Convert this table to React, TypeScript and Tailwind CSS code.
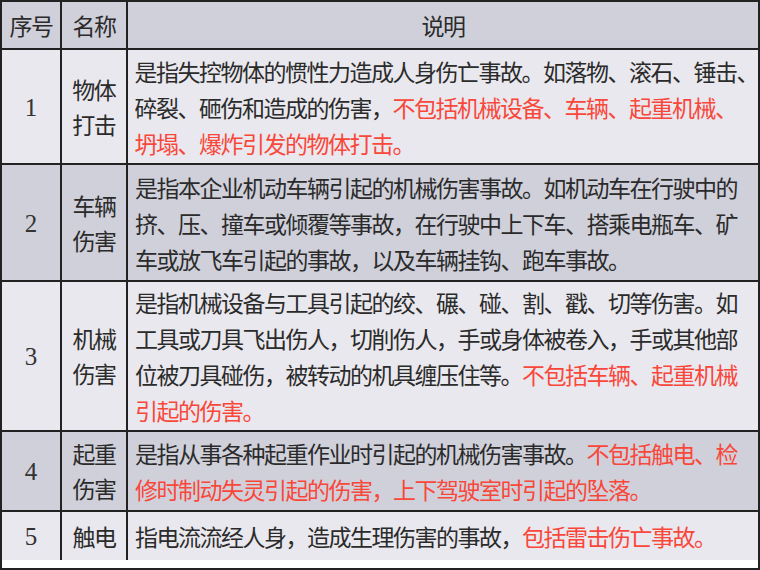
type Seg = { t: string; red?: boolean };

interface IRow {
  no: string;
  name: string[];
  lines: Seg[][];
  dark: boolean;
  height: string;
}

const rows: IRow[] = [
  {
    no: "1",
    name: ["物体", "打击"],
    dark: false,
    height: "h-[115px]",
    lines: [
      [{ t: "是指失控物体的惯性力造成人身伤亡事故。如落物、滚石、锤击、" }],
      [
        { t: "碎裂、砸伤和造成的伤害，" },
        { t: "不包括机械设备、车辆、起重机械、", red: true },
      ],
      [{ t: "坍塌、爆炸引发的物体打击。", red: true }],
    ],
  },
  {
    no: "2",
    name: ["车辆", "伤害"],
    dark: true,
    height: "h-[117px]",
    lines: [
      [{ t: "是指本企业机动车辆引起的机械伤害事故。如机动车在行驶中的" }],
      [{ t: "挤、压、撞车或倾覆等事故，在行驶中上下车、搭乘电瓶车、矿" }],
      [{ t: "车或放飞车引起的事故，以及车辆挂钩、跑车事故。" }],
    ],
  },
  {
    no: "3",
    name: ["机械", "伤害"],
    dark: false,
    height: "h-[150px]",
    lines: [
      [{ t: "是指机械设备与工具引起的绞、碾、碰、割、戳、切等伤害。如" }],
      [{ t: "工具或刀具飞出伤人，切削伤人，手或身体被卷入，手或其他部" }],
      [
        { t: "位被刀具碰伤，被转动的机具缠压住等。" },
        { t: "不包括车辆、起重机械", red: true },
      ],
      [{ t: "引起的伤害。", red: true }],
    ],
  },
  {
    no: "4",
    name: ["起重", "伤害"],
    dark: true,
    height: "h-[80px]",
    lines: [
      [
        { t: "是指从事各种起重作业时引起的机械伤害事故。" },
        { t: "不包括触电、检", red: true },
      ],
      [{ t: "修时制动失灵引起的伤害，上下驾驶室时引起的坠落。", red: true }],
    ],
  },
  {
    no: "5",
    name: ["触电"],
    dark: false,
    height: "h-[48px]",
    lines: [
      [
        { t: "指电流流经人身，造成生理伤害的事故，" },
        { t: "包括雷击伤亡事故。", red: true },
      ],
    ],
  },
];

const cjk = "font-['Noto_Sans_CJK_SC',sans-serif] text-[23px] tracking-[-1.5px] text-[#2b2b2b]";

function TableRow({ row, last }: { row: IRow; last: boolean }) {
  return (
    <div
      className={`flex ${row.height} ${row.dark ? "bg-[#d0d0da]" : "bg-[#e9e8ee]"} ${
        last ? "" : "border-b-2 border-[#222]"
      }`}
    >
      <div className="flex w-[60px] items-center justify-center border-r-2 border-[#222] pt-[2px] font-['Liberation_Serif',serif] text-[25px] text-[#333]">
        {row.no}
      </div>
      <div className={`flex w-[66px] flex-col items-center justify-center border-r-2 border-[#222] leading-[35px] ${cjk}`}>
        {row.name.map((n) => (
          <div key={n}>{n}</div>
        ))}
      </div>
      <div className={`flex flex-1 flex-col justify-center pl-[7px] leading-[36px] ${cjk}`}>
        {row.lines.map((line, i) => (
          <div key={i} className="whitespace-nowrap">
            {line.map((s, j) => (
              <span key={j} className={s.red ? "text-[#f9473a]" : ""}>
                {s.t}
              </span>
            ))}
          </div>
        ))}
      </div>
    </div>
  );
}

export default function App() {
  return (
    <div className="h-[570px] w-[760px] overflow-hidden border-2 border-[#222] bg-white">
      <div className={`flex h-[48px] border-b-2 border-[#222] bg-[#d0d0da] ${cjk}`}>
        <div className="flex w-[60px] items-center justify-center border-r-2 border-[#222]">序号</div>
        <div className="flex w-[66px] items-center justify-center border-r-2 border-[#222]">名称</div>
        <div className="flex flex-1 items-center justify-center">说明</div>
      </div>
      {rows.map((row, i) => (
        <TableRow key={row.no} row={row} last={i === rows.length - 1} />
      ))}
    </div>
  );
}
